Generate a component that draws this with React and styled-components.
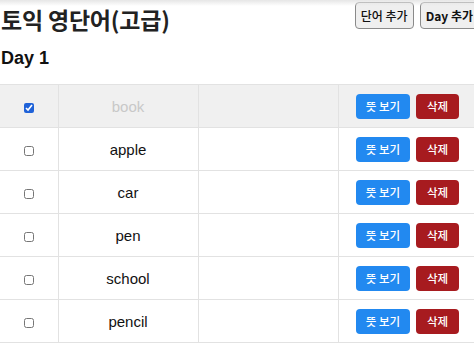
import React from "react";
import styled, { createGlobalStyle } from "styled-components";

const Global = createGlobalStyle`
  html, body { margin: 0; padding: 0; background: #fff; overflow: hidden; }
  body { font-family: "Liberation Sans", "Noto Sans CJK KR", sans-serif; color: #111; }
`;

const Page = styled.div`
  position: relative;
  width: 474px;
  &::before {
    content: "";
    position: absolute;
    left: 0; right: 0; top: 0; height: 6px;
    background: linear-gradient(#e6e6e6, rgba(255,255,255,0));
    pointer-events: none;
  }
`;

const Header = styled.header`
  display: flex;
  justify-content: space-between;
  align-items: flex-start;
  height: 40px;
`;

const Title = styled.h1`
  margin: 2px 0 0 1px;
  font-family: "Noto Sans CJK KR", sans-serif;
  font-size: 23px;
  font-weight: 700;
  color: #222;
  letter-spacing: -0.2px;
`;

const Menu = styled.div`
  display: flex;
  gap: 6px;
  padding-top: 2px;
  margin-right: -5px;
`;

const MenuButton = styled.button`
  height: 27px;
  padding: 0 5px;
  background: #efefef;
  border: 1px solid #8a8a8a;
  border-radius: 4px;
  font-family: "Noto Sans CJK KR", sans-serif;
  font-size: 12px;
  font-weight: ${(p) => (p.$bold ? 700 : 500)};
  color: #111;
`;

const DayTitle = styled.h2`
  margin: 8px 0 0 1px;
  font-size: 18px;
  font-weight: 700;
  color: #111;
  height: 36px;
`;

const TableWrap = styled.div`
  overflow: hidden;
`;

const Table = styled.table`
  width: 476px;
  border-collapse: collapse;
  table-layout: fixed;
`;

const Row = styled.tr`
  height: 43px;
  background: ${(p) => (p.$done ? "#f0f0f0" : "#fff")};
  color: ${(p) => (p.$done ? "#c8c8c8" : "#111")};
`;

const Cell = styled.td`
  border: 1px solid #e2e2e2;
  text-align: center;
  font-size: 15px;
  padding: 0;
  &:first-child { border-left: none; }
`;

const Check = styled.input`
  width: 10px;
  height: 10px;
  margin: 0;
  vertical-align: middle;
  accent-color: #1f62d8;
`;

const Actions = styled.div`
  display: flex;
  justify-content: center;
  gap: 6px;
  padding-left: 1px;
`;

const ActionButton = styled.button`
  height: 25px;
  border: none;
  border-radius: 4px;
  padding: 0;
  width: ${(p) => (p.$danger ? "43px" : "54px")};
  background: ${(p) => (p.$danger ? "#a71b1f" : "#2289f0")};
  color: #fff;
  font-family: "Noto Sans CJK KR", sans-serif;
  font-size: 11.5px;
  font-weight: 500;
`;

const words = [
  { w: "book", done: true },
  { w: "apple" },
  { w: "car" },
  { w: "pen" },
  { w: "school" },
  { w: "pencil" },
];

export default function App() {
  return (
    <Page>
      <Global />
      <Header>
        <Title>토익 영단어(고급)</Title>
        <Menu>
          <MenuButton>단어 추가</MenuButton>
          <MenuButton $bold>Day 추가</MenuButton>
        </Menu>
      </Header>
      <DayTitle>Day 1</DayTitle>
      <TableWrap>
        <Table>
          <colgroup>
            <col style={{ width: 58 }} />
            <col style={{ width: 140 }} />
            <col style={{ width: 140 }} />
            <col style={{ width: 138 }} />
          </colgroup>
          <tbody>
            {words.map((it) => (
              <Row key={it.w} $done={it.done}>
                <Cell>
                  <Check type="checkbox" defaultChecked={!!it.done} />
                </Cell>
                <Cell>{it.w}</Cell>
                <Cell></Cell>
                <Cell>
                  <Actions>
                    <ActionButton>뜻 보기</ActionButton>
                    <ActionButton $danger>삭제</ActionButton>
                  </Actions>
                </Cell>
              </Row>
            ))}
          </tbody>
        </Table>
      </TableWrap>
    </Page>
  );
}
